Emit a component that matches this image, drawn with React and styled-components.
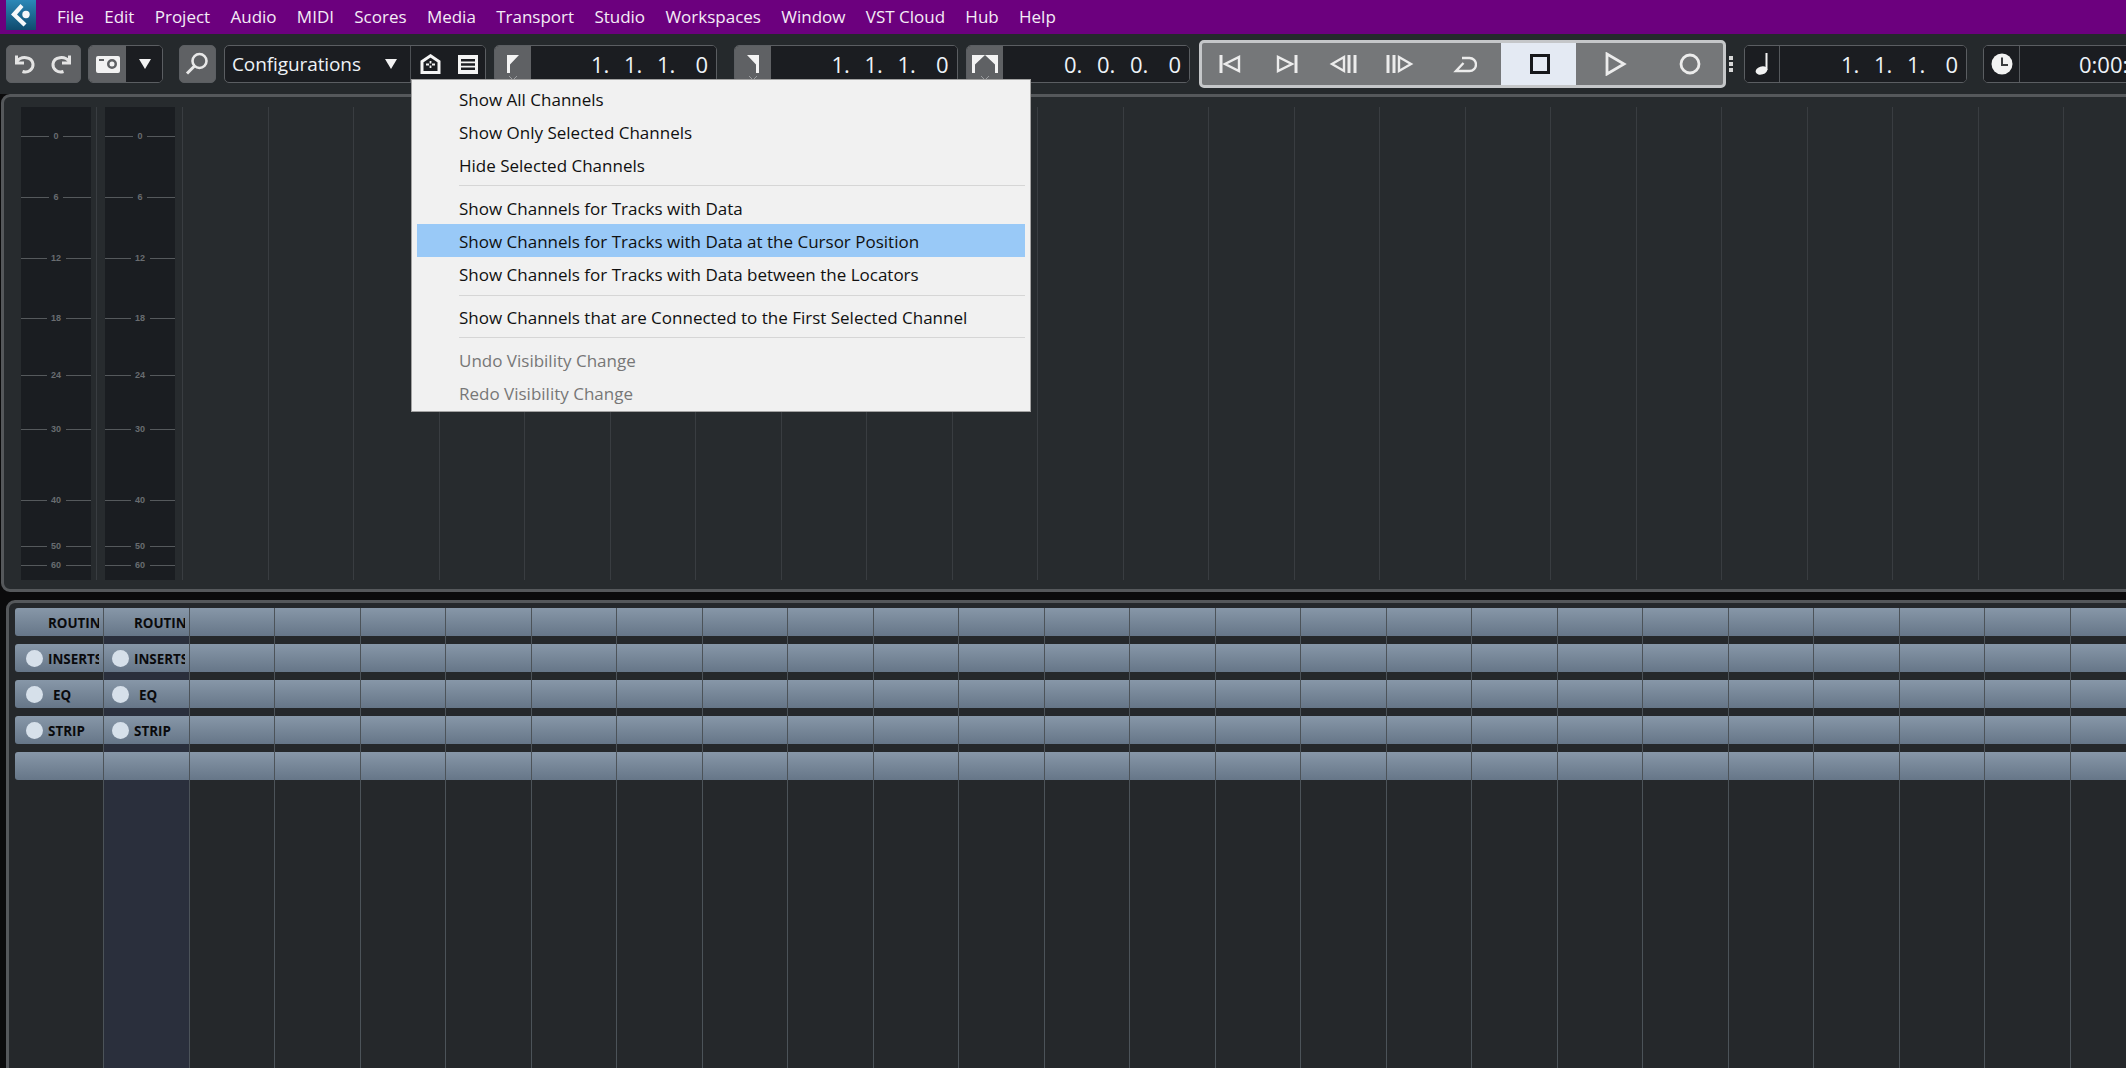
import React from "react";
import styled, { createGlobalStyle } from "styled-components";

const GlobalStyle = createGlobalStyle`
  html, body {
    margin: 0;
    padding: 0;
    background: #0b0b0c;
  }
  * {
    box-sizing: border-box;
  }
`;

const Page = styled.div`
  width: 2126px;
  height: 1068px;
  overflow: hidden;
  position: relative;
  display: flex;
  flex-direction: column;
  font-family: "Open Sans", "Noto Sans", sans-serif;
  background: #0b0b0c;
`;

const MenuBar = styled.div`
  height: 34px;
  flex-shrink: 0;
  display: flex;
  align-items: flex-start;
  background: #6c007e;
`;

const Logo = styled.svg`
  width: 30px;
  height: 30px;
  margin-left: 6px;
  margin-right: 21px;
`;

const MenuLabel = styled.span`
  height: 34px;
  line-height: 33px;
  margin-right: 20.3px;
  font-size: 17px;
  color: #f4ecf6;
`;

const Toolbar = styled.div`
  height: 60px;
  flex-shrink: 0;
  display: flex;
  align-items: flex-start;
  padding: 11px 0 0 6px;
  background: #25292c;
`;

const Group = styled.div`
  display: flex;
  flex-shrink: 0;
  width: ${(p) => p.$w}px;
  height: 38px;
  margin-left: ${(p) => p.$gap || 0}px;
  border: 1.5px solid #5b5e62;
  border-radius: 5px;
  background: ${(p) => (p.$grey ? "#5f6164" : "#1b1d21")};
  overflow: hidden;
`;

const IconCell = styled.div`
  display: flex;
  align-items: center;
  justify-content: ${(p) => p.$justify || "center"};
  gap: ${(p) => p.$space || 0}px;
  width: ${(p) => p.$w}px;
  padding-left: ${(p) => p.$pad || 0}px;
  flex-shrink: 0;
  background: ${(p) => (p.$dark ? "#1b1d21" : "#5f6164")};
  border-right: ${(p) => (p.$divider ? "1px solid #55585c" : "none")};
  position: relative;
`;

const LocatorCaret = styled.span`
  position: absolute;
  left: 50%;
  bottom: 2px;
  margin-left: -4px;
  width: 8px;
  height: 4px;
  background: linear-gradient(to top right, transparent 46%, #9a9c9f 46%, #9a9c9f 62%, transparent 62%) left / 50% 100% no-repeat,
    linear-gradient(to top left, transparent 46%, #9a9c9f 46%, #9a9c9f 62%, transparent 62%) right / 50% 100% no-repeat;
`;

const ConfigName = styled.div`
  flex: 1;
  display: flex;
  align-items: center;
  justify-content: space-between;
  padding: 0 12px 0 7px;
  font-size: 19px;
  letter-spacing: -0.1px;
  color: #eef2f6;
  border-right: 1.5px solid #4d5054;
`;

const NumberField = styled.div`
  flex: 1;
  display: flex;
  align-items: center;
  justify-content: flex-end;
  padding-right: 8px;
  background: #1b1d21;
  font-size: 22px;
  color: #eef3f8;
`;

const Segment = styled.span`
  width: ${(p) => p.$w || 33}px;
  text-align: ${(p) => (p.$end ? "right" : "left")};
`;

const ClockText = styled.div`
  padding-left: 59px;
  display: flex;
  align-items: center;
  flex: 1;
  background: #1b1d21;
  font-size: 22px;
  color: #eef3f8;
`;

const Transport = styled.div`
  display: flex;
  flex-shrink: 0;
  width: 527px;
  height: 48px;
  margin-left: 9px;
  margin-top: -5px;
  border: 3px solid #c5c7c9;
  border-radius: 5px;
  background: #757779;
`;

const TransportButton = styled.div`
  width: ${(p) => p.$w}px;
  flex-shrink: 0;
  display: flex;
  align-items: center;
  justify-content: center;
  padding-left: ${(p) => p.$pad || 0}px;
  background: ${(p) => (p.$active ? "#e4eaf3" : "transparent")};
`;

const Grip = styled.div`
  display: flex;
  flex-direction: column;
  gap: 2px;
  margin: 11px 11px 0 3px;
  & > span {
    width: 4px;
    height: 4px;
    background: #d8d8d8;
  }
`;

const UpperPanel = styled.div`
  display: flex;
  flex-shrink: 0;
  height: 498px;
  margin: 0 -10px 0 1px;
  padding: 10px 0 9px 0;
  border: 3px solid #55585b;
  border-radius: 9px;
  background: #272b2e;
`;

const Slot = styled.div`
  flex-shrink: 0;
  width: ${(p) => p.$w || 85.5}px;
  padding-left: ${(p) => p.$pad || 0}px;
  border-right: 1px solid #393d41;
`;

const Meter = styled.div`
  position: relative;
  width: 70px;
  height: 100%;
  background: #1a1d21;
`;

const Tick = styled.div`
  position: absolute;
  left: 0;
  right: 0;
  top: ${(p) => p.$y}px;
  height: 10px;
  display: flex;
  align-items: center;
  font-family: "Liberation Sans", sans-serif;
  font-size: 9px;
  font-weight: 700;
  color: #686c70;
  &::before,
  &::after {
    content: "";
    flex: 1;
    height: 1px;
    background: #55595c;
  }
  & > span {
    padding: 0 4.5px;
  }
`;

const LowerPanel = styled.div`
  display: flex;
  flex: 1;
  margin: 8px -10px -10px 6px;
  padding: 5px 0 0 6px;
  border: 3px solid #55585b;
  border-radius: 9px;
  background: #25282b;
`;

const Channel = styled.div`
  flex-shrink: 0;
  width: ${(p) => p.$w || 85.5}px;
  display: flex;
  flex-direction: column;
  border-right: 1px solid #4c5359;
`;

const ChannelBody = styled.div`
  flex: 1;
  display: flex;
  flex-direction: column;
  gap: 8px;
  padding-top: 8px;
  background: ${(p) => (p.$selected ? "#2a2f3c" : "transparent")};
`;

const Cell = styled.div`
  height: 28px;
  flex-shrink: 0;
  display: flex;
  align-items: center;
  gap: 5.5px;
  padding-left: ${(p) => (p.$first ? 10.5 : 7.5)}px;
  background: linear-gradient(#8797a8, #667688);
  border-radius: ${(p) => (p.$first ? "3px 0 0 3px" : "0")};
`;

const Radio = styled.span`
  width: 17px;
  height: 17px;
  flex-shrink: 0;
  border-radius: 50%;
  background: #d6e0ea;
  visibility: ${(p) => (p.$off ? "hidden" : "visible")};
`;

const CellLabel = styled.span`
  width: 51px;
  padding-left: ${(p) => p.$indent || 0}px;
  padding-top: 1px;
  overflow: hidden;
  white-space: nowrap;
  font-size: 13.4px;
  font-weight: 700;
  color: #0a0a0c;
`;

const DropMenu = styled.div`
  position: absolute;
  left: 411px;
  top: 79px;
  width: 620px;
  height: 333px;
  padding: 2px 5px;
  border: 1px solid #a2a2a2;
  background: #f1f1f1;
`;

const DropItem = styled.div`
  height: 33px;
  padding: 2px 0 0 42px;
  line-height: 31px;
  font-size: 17px;
  white-space: nowrap;
  color: ${(p) => (p.$disabled ? "#777777" : "#101010")};
  background: ${(p) => (p.$active ? "#99c9f7" : "transparent")};
`;

const DropSeparator = styled.div`
  height: 1px;
  margin: ${(p) => p.$before}px 0 ${(p) => 9 - p.$before}px 42px;
  background: #d6d6d6;
`;

const menus = ["File", "Edit", "Project", "Audio", "MIDI", "Scores", "Media", "Transport", "Studio", "Workspaces", "Window", "VST Cloud", "Hub", "Help"];
const scale = [
  ["0", 24],
  ["6", 85],
  ["12", 146],
  ["18", 206],
  ["24", 263],
  ["30", 317],
  ["40", 388],
  ["50", 434],
  ["60", 453],
];
const rows = [
  { label: "ROUTING", noRadio: true },
  { label: "INSERTS" },
  { label: "EQ", indent: 5 },
  { label: "STRIP" },
];

const Triangle = () => (
  <svg width="14" height="12" viewBox="0 0 14 12">
    <path d="M1 1h12L7 11z" fill="#f2f2f2" />
  </svg>
);

const CubaseLogo = () => (
  <Logo viewBox="0 0 30 30">
    <defs>
      <linearGradient id="logoFill" x1="0" y1="0" x2="0" y2="1">
        <stop offset="0" stopColor="#2b88b8" />
        <stop offset="1" stopColor="#0f4b6e" />
      </linearGradient>
    </defs>
    <rect width="30" height="30" fill="url(#logoFill)" />
    <path d="M14.5 4 5 14.5 17.5 26.5 20.5 23.5 11 14.5 17.5 7z" fill="#f6f8fa" />
    <circle cx="20" cy="14.5" r="3.7" fill="#f6f8fa" />
  </Logo>
);

const UndoIcon = ({ flip }) => (
  <svg width="22" height="22" viewBox="0 0 22 22" transform={flip ? "scale(-1 1)" : undefined}>
    <path d="M3 8.5 C7 2.5 18 3.5 19 11 C19.5 16.5 14 20.5 8.5 18.5" fill="none" stroke="#e4e4e4" strokeWidth="3" />
    <path d="M2.5 2.5 V10 H10" fill="none" stroke="#e4e4e4" strokeWidth="3" />
  </svg>
);

const CameraIcon = () => (
  <svg width="24" height="17" viewBox="0 0 24 17">
    <path
      fillRule="evenodd"
      d="M2 0h20a2 2 0 0 1 2 2v13a2 2 0 0 1-2 2H2a2 2 0 0 1-2-2V2a2 2 0 0 1 2-2zM3 3v2h5V3zM16 3a5 5 0 1 0 0 10 5 5 0 0 0 0-10zM16 5.5a2.5 2.5 0 1 1 0 5 2.5 2.5 0 0 1 0-5z"
      fill="#f2f2f2"
    />
  </svg>
);

const SearchIcon = () => (
  <svg width="24" height="24" viewBox="0 0 24 24">
    <circle cx="14.5" cy="9" r="7" fill="none" stroke="#e8e8e8" strokeWidth="2.6" />
    <path d="M9.5 14 2 21.5" stroke="#e8e8e8" strokeWidth="3" />
  </svg>
);

const HouseIcon = () => (
  <svg width="21" height="20" viewBox="0 0 21 20">
    <path d="M10.5 1.8 19 7.6V18.5H2V7.6z" fill="none" stroke="#f4f4f4" strokeWidth="3" />
    <path d="M10.5 7v2.5M10.5 11.5v2.5M6 10.5h3M12 10.5h3" stroke="#f4f4f4" strokeWidth="1.8" />
  </svg>
);

const ListIcon = () => (
  <svg width="20" height="19" viewBox="0 0 20 19">
    <path fillRule="evenodd" d="M0 0h20v19H0zM3 4v2.5h14V4zM3 8.3v2.4h14V8.3zM3 12.5V15h14v-2.5z" fill="#f4f4f4" />
  </svg>
);

const LeftFlag = () => (
  <svg width="12" height="18" viewBox="0 0 12 18">
    <path d="M0 0h12L3 9.5V18H0z" fill="#f4f4f4" />
  </svg>
);

const RightFlag = () => (
  <svg width="12" height="18" viewBox="0 0 12 18">
    <path d="M12 0H0l9 9.5V18h3z" fill="#f4f4f4" />
  </svg>
);

const RangeFlag = () => (
  <svg width="26" height="18" viewBox="0 0 26 18">
    <path d="M0 0h13L3 9.5V18H0zM26 0H13l10 9.5V18h3z" fill="#f4f4f4" />
  </svg>
);

const NoteIcon = () => (
  <svg width="14" height="22" viewBox="0 0 14 22">
    <path d="M10.5 0h2v17h-2z" fill="#f2f2f2" />
    <ellipse cx="6.5" cy="17.5" rx="6" ry="4" transform="rotate(-18 6.5 17.5)" fill="#f2f2f2" />
  </svg>
);

const ClockIcon = () => (
  <svg width="22" height="22" viewBox="0 0 22 22">
    <circle cx="11" cy="11" r="10.5" fill="#f2f2f2" />
    <path d="M11 4.5V12H17" fill="none" stroke="#3a3c3f" strokeWidth="2" />
  </svg>
);

const tpStroke = { fill: "none", stroke: "#ececec", strokeWidth: 2.4 };

const GoStart = () => (
  <svg width="24" height="20" viewBox="0 0 24 20">
    <path d="M3 1v18" {...tpStroke} strokeWidth="3" />
    <path d="M21 3v14L7 10z" {...tpStroke} />
  </svg>
);
const GoEnd = () => (
  <svg width="24" height="20" viewBox="0 0 24 20">
    <path d="M21 1v18" {...tpStroke} strokeWidth="3" />
    <path d="M3 3v14l14-7z" {...tpStroke} />
  </svg>
);
const Rewind = () => (
  <svg width="28" height="20" viewBox="0 0 28 20">
    <path d="M15 3v14L3 10z" {...tpStroke} />
    <path d="M20 1v18M26 1v18" {...tpStroke} strokeWidth="3" />
  </svg>
);
const Forward = () => (
  <svg width="28" height="20" viewBox="0 0 28 20">
    <path d="M13 3v14l12-7z" {...tpStroke} />
    <path d="M2 1v18M8 1v18" {...tpStroke} strokeWidth="3" />
  </svg>
);
const CycleIcon = () => (
  <svg width="24" height="17" viewBox="0 0 24 17">
    <path d="M9 2h7.5a6 6 0 0 1 0 13H3L10.5 7" {...tpStroke} />
  </svg>
);
const StopIcon = () => (
  <svg width="20" height="20" viewBox="0 0 20 20">
    <rect x="1.5" y="1.5" width="17" height="17" fill="none" stroke="#16181b" strokeWidth="3" />
  </svg>
);
const PlayIcon = () => (
  <svg width="22" height="24" viewBox="0 0 22 24">
    <path d="M2 2v20l17-10z" {...tpStroke} strokeWidth="2.8" />
  </svg>
);
const RecordIcon = () => (
  <svg width="22" height="22" viewBox="0 0 22 22">
    <circle cx="11" cy="11" r="9" {...tpStroke} strokeWidth="2.8" />
  </svg>
);

const PositionValue = ({ value }) => (
  <NumberField>
    <Segment>{value}.</Segment>
    <Segment>{value}.</Segment>
    <Segment>{value}.</Segment>
    <Segment $w={18} $end>
      0
    </Segment>
  </NumberField>
);

const ChannelMeter = () => (
  <Meter>
    {scale.map(([label, y]) => (
      <Tick key={label} $y={y}>
        <span>{label}</span>
      </Tick>
    ))}
  </Meter>
);

const MixerChannel = ({ index }) => {
  const used = index < 2;
  const first = index === 0;
  const cells = used ? rows : [{}, {}, {}, {}];
  const [head, ...rest] = [...cells, {}];
  const renderCell = (row, key) => (
    <Cell key={key} $first={first}>
      {row.label && (
        <>
          <Radio $off={row.noRadio} />
          <CellLabel $indent={row.indent}>{row.label}</CellLabel>
        </>
      )}
    </Cell>
  );
  return (
    <Channel $w={first ? 89 : 85.5}>
      {renderCell(head, "head")}
      <ChannelBody $selected={index === 1}>{rest.map((row, i) => renderCell(row, i))}</ChannelBody>
    </Channel>
  );
};

export default function App() {
  return (
    <Page>
      <GlobalStyle />
      <MenuBar>
        <CubaseLogo />
        {menus.map((name) => (
          <MenuLabel key={name}>{name}</MenuLabel>
        ))}
      </MenuBar>

      <Toolbar>
        <Group $w={75} $grey>
          <IconCell $w={72} $space={14}>
            <UndoIcon />
            <UndoIcon flip />
          </IconCell>
        </Group>
        <Group $w={75} $gap={7}>
          <IconCell $w={37}>
            <CameraIcon />
          </IconCell>
          <IconCell $w={36} $dark $pad={2}>
            <Triangle />
          </IconCell>
        </Group>
        <Group $w={37} $gap={16} $grey>
          <IconCell $w={34}>
            <SearchIcon />
          </IconCell>
        </Group>
        <Group $w={261.5} $gap={8}>
          <ConfigName>
            Configurations
            <Triangle />
          </ConfigName>
          <IconCell $w={74} $dark $justify="flex-start" $pad={9} $space={17}>
            <HouseIcon />
            <ListIcon />
          </IconCell>
        </Group>
        <Group $w={223} $gap={8.5}>
          <IconCell $w={36}>
            <LeftFlag />
            <LocatorCaret />
          </IconCell>
          <PositionValue value="1" />
        </Group>
        <Group $w={223.5} $gap={17}>
          <IconCell $w={36}>
            <RightFlag />
            <LocatorCaret />
          </IconCell>
          <PositionValue value="1" />
        </Group>
        <Group $w={224} $gap={8.5}>
          <IconCell $w={36}>
            <RangeFlag />
            <LocatorCaret />
          </IconCell>
          <PositionValue value="0" />
        </Group>
        <Transport>
          <TransportButton $w={56}>
            <GoStart />
          </TransportButton>
          <TransportButton $w={57}>
            <GoEnd />
          </TransportButton>
          <TransportButton $w={56}>
            <Rewind />
          </TransportButton>
          <TransportButton $w={58}>
            <Forward />
          </TransportButton>
          <TransportButton $w={72}>
            <CycleIcon />
          </TransportButton>
          <TransportButton $w={75} $active $pad={3}>
            <StopIcon />
          </TransportButton>
          <TransportButton $w={77} $pad={3}>
            <PlayIcon />
          </TransportButton>
          <TransportButton $w={70} $pad={4}>
            <RecordIcon />
          </TransportButton>
        </Transport>
        <Grip>
          <span />
          <span />
          <span />
        </Grip>
        <Group $w={223}>
          <IconCell $w={35} $dark $divider>
            <NoteIcon />
          </IconCell>
          <PositionValue value="1" />
        </Group>
        <Group $w={300} $gap={16}>
          <IconCell $w={36} $dark $divider>
            <ClockIcon />
          </IconCell>
          <ClockText>0:00:00.000</ClockText>
        </Group>
      </Toolbar>

      <UpperPanel>
        <Slot $w={93} $pad={17}>
          <ChannelMeter />
        </Slot>
        <Slot $w={86} $pad={8}>
          <ChannelMeter />
        </Slot>
        {Array.from({ length: 23 }, (_, i) => (
          <Slot key={i} />
        ))}
      </UpperPanel>

      <LowerPanel>
        {Array.from({ length: 25 }, (_, i) => (
          <MixerChannel key={i} index={i} />
        ))}
      </LowerPanel>

      <DropMenu>
        <DropItem>Show All Channels</DropItem>
        <DropItem>Show Only Selected Channels</DropItem>
        <DropItem>Hide Selected Channels</DropItem>
        <DropSeparator $before={4} />
        <DropItem>Show Channels for Tracks with Data</DropItem>
        <DropItem $active>Show Channels for Tracks with Data at the Cursor Position</DropItem>
        <DropItem>Show Channels for Tracks with Data between the Locators</DropItem>
        <DropSeparator $before={5} />
        <DropItem>Show Channels that are Connected to the First Selected Channel</DropItem>
        <DropSeparator $before={4} />
        <DropItem $disabled>Undo Visibility Change</DropItem>
        <DropItem $disabled>Redo Visibility Change</DropItem>
      </DropMenu>
    </Page>
  );
}
